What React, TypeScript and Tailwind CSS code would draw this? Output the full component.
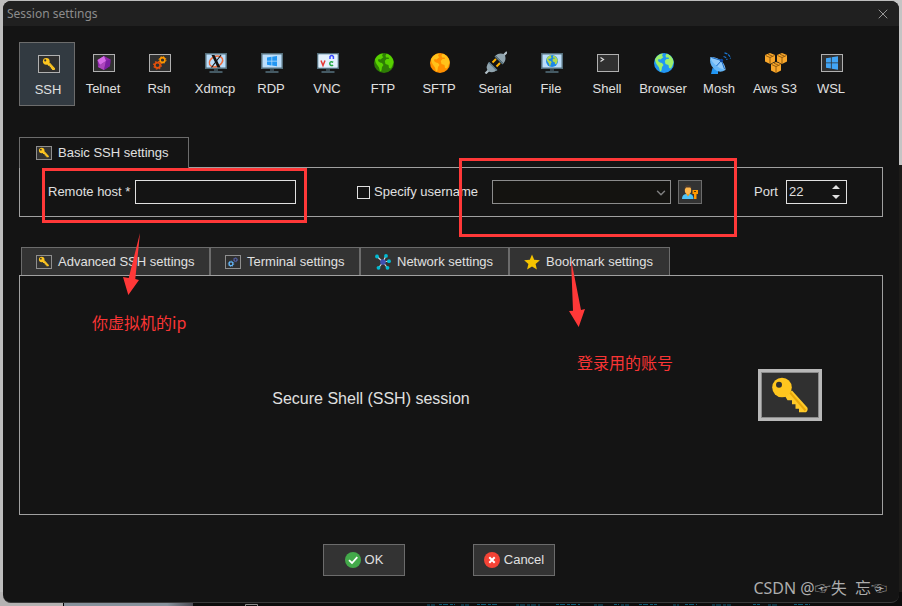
import { useState } from "react";
import type { ReactNode } from "react";
import { ChevronDown, X } from "lucide-react";

const KeyShape = () => (
  <>
    <path
      d="M34 21.5 49.3 38.5Q50.5 41 48 43.3H41V39.7H37.5V35.3H34V31.3H29.5L27 27Z"
      fill="#ffca28"
    />
    <path d="M32 23.5 47.5 41.5" stroke="#e8a80c" strokeWidth="2" />
    <circle cx="24" cy="18.5" r="9.8" fill="#ffc61e" />
    <circle cx="21" cy="15.7" r="3" fill="#303030" />
  </>
);

const KeyFrame = ({ className }: { className: string }) => (
  <svg viewBox="0 0 64 56" className={className} aria-hidden="true">
    <rect x="2" y="2" width="60" height="52" fill="#333" stroke="#8f8f8f" strokeWidth="4" />
    <g transform="translate(-4 -3) scale(1.12)">
      <KeyShape />
    </g>
  </svg>
);

const Frame = ({ children }: { children: ReactNode }) => (
  <>
    <rect x="2.5" y="4.5" width="21" height="17" fill="#303030" stroke="#b0b0b0" />
    {children}
  </>
);

const Monitor = ({ children }: { children: ReactNode }) => (
  <>
    <rect x="2" y="3" width="22" height="16" fill="#546e7a" />
    <rect x="3.5" y="4.5" width="19" height="13" fill="#bbdefb" />
    <rect x="11" y="19" width="4" height="2" fill="#37474f" />
    <rect x="6.5" y="21" width="13" height="2" fill="#455a64" />
    {children}
  </>
);

const Gear = ({
  x,
  y,
  r,
  color,
}: {
  x: number;
  y: number;
  r: number;
  color: string;
}) => (
  <g transform={`translate(${x} ${y})`} fill="none" stroke={color}>
    <circle r={r} strokeWidth={r * 0.65} />
    <circle
      r={r * 1.45}
      strokeWidth={r * 0.4}
      strokeDasharray={`${r * 0.57} ${r * 0.57}`}
    />
  </g>
);

const Globe = ({ sea, land }: { sea: string; land: string }) => (
  <>
    <circle cx="13" cy="13" r="10" fill={sea} />
    <path
      d="M4 9.5Q5.500 5.500 9.500 4L12 3.500 11 6 12.500 7 9.500 9.500 7.500 9 7 11 9 12.500 11 13 12.500 15 11 17 10.500 20.500 9 21.500 8 17.500 5.500 14 4.500 12ZM15.500 3.800Q20 5 22 9.500L22.600 12 21.500 15.500 20 18.500 18 18 17.500 15 14.500 14 13.800 11 15.500 9 18 9 17.500 7.500 15 7.500 14.500 5.500Z"
      fill={land}
    />
  </>
);

const WindowsLogo = () => (
  <path
    d="M7 8.200 11.900 7.400V12.500H7ZM12.700 7.300 19 6.300V12.500H12.700ZM7 13.300H11.900V18.600L7 17.800ZM12.700 13.300H19V19.700L12.700 18.700Z"
    fill="#42a5f5"
  />
);

const Cube = ({ x, y }: { x: number; y: number }) => (
  <g transform={`translate(${x} ${y})`}>
    <path d="M0 2 5 0 10 2V8.500L5 11 0 8.500Z" fill="#f9a72b" />
    <path
      d="M0.500 2.500 5 4.500 9.500 2.500M5 4.500V11M3 1.200 7.500 3.200"
      fill="none"
      stroke="#7a4a08"
      strokeWidth="0.800"
    />
  </g>
);

interface SessionType {
  name: string;
  icon: ReactNode;
}

const sessionTypes: SessionType[] = [
  {
    name: "SSH",
    icon: (
      <Frame>
        <g transform="translate(2 4) scale(0.344)">
          <KeyShape />
        </g>
      </Frame>
    ),
  },
  {
    name: "Telnet",
    icon: (
      <Frame>
        <path d="M13 6 19.500 9.500 19 16 13 20 7 17 6.500 10Z" fill="#8e24aa" />
        <path d="M13 6 15 11 9 15 6.500 10Z" fill="#d56be6" />
        <path d="M9 15 15 11 13 20 7 17Z" fill="#ab47bc" />
        <path d="M15 11 19.500 9.500 19 16 13 20Z" fill="#7b1fa2" />
      </Frame>
    ),
  },
  {
    name: "Rsh",
    icon: (
      <Frame>
        <Gear x={15.5} y={10} r={2.4} color="#ff9800" />
        <Gear x={10.5} y={15.3} r={2.7} color="#e2500c" />
      </Frame>
    ),
  },
  {
    name: "Xdmcp",
    icon: (
      <Monitor>
        <ellipse
          cx="13"
          cy="11.500"
          rx="7"
          ry="5"
          fill="none"
          stroke="#ef6c3a"
          strokeWidth="1.500"
          transform="rotate(-25 13 11.500)"
        />
        <path d="M8.500 5H11.500L17.500 17.500H14.500Z" fill="#111" />
        <path d="M18 5 8.500 17.500" stroke="#111" strokeWidth="1.100" />
      </Monitor>
    ),
  },
  {
    name: "RDP",
    icon: (
      <Monitor>
        <path
          d="M8 7.500 12.500 6.800V10.700H8ZM13.200 6.700 18 6V10.700H13.200ZM8 11.400H12.500V15.500L8 14.800ZM13.200 11.400H18V16.200L13.200 15.600Z"
          fill="#2196f3"
        />
      </Monitor>
    ),
  },
  {
    name: "VNC",
    icon: (
      <Monitor>
        <rect x="3.500" y="4.500" width="19" height="13" fill="#e3f1fd" />
        <path d="M6 10.500 8 15.500 10 10.500" fill="none" stroke="#e53935" strokeWidth="1.500" />
        <path d="M15 9V6.500Q16.700 4.700 18.400 6.500V9" fill="none" stroke="#3949ff" strokeWidth="1.500" />
        <path d="M18.200 12.200Q14.800 10.800 14.800 13.600 14.800 16.200 18.200 15.200" fill="none" stroke="#22a843" strokeWidth="1.500" />
      </Monitor>
    ),
  },
  { name: "FTP", icon: <Globe sea="#2e7d05" land="#58d000" /> },
  { name: "SFTP", icon: <Globe sea="#ff8f00" land="#ffc21a" /> },
  {
    name: "Serial",
    icon: (
      <>
        <path d="M9.500 12.500 13 9M13.500 16.500 17 13" stroke="#ffb300" strokeWidth="2" />
        <path d="M2.500 23.500 6.500 19.500M20 6 24 2" stroke="#b0bec5" strokeWidth="2.200" />
        <path d="M6 12 14 20Q9.500 24 5 21 2 16.500 6 12Z" fill="#90a4ae" />
        <path d="M12.500 5.500 20.500 13.500Q24 9.500 21.500 4.500 16.500 2 12.500 5.500Z" fill="#90a4ae" />
        <path d="M6 12.500 14 20.500M12 6 20 14" stroke="#607d8b" strokeWidth="1.500" />
      </>
    ),
  },
  {
    name: "File",
    icon: (
      <Monitor>
        <g transform="translate(5.200 3.200) scale(0.600)">
          <Globe sea="#1e88e5" land="#b2d94b" />
        </g>
      </Monitor>
    ),
  },
  {
    name: "Shell",
    icon: (
      <Frame>
        <path d="M5.500 7.500 8.500 9.500 5.500 11.500" fill="none" stroke="#ddd" strokeWidth="1.200" />
      </Frame>
    ),
  },
  { name: "Browser", icon: <Globe sea="#2196f3" land="#9cf06a" /> },
  {
    name: "Mosh",
    icon: (
      <>
        <path d="M4 24 5.500 18 11 20V24Z" fill="#2196f3" />
        <path d="M3.500 7 18.500 20Q12.500 24 7 19 1.500 13.500 3.500 7Z" fill="#64b5f6" />
        <path d="M3.500 7Q10 7 14.500 11 18.500 15 18.500 20 12 18.500 8 14.500 4 11 3.500 7Z" fill="#90caf9" />
        <path d="M14.500 10.500 9.500 16M4.500 7.500 14.500 10.500 17.500 19" fill="none" stroke="#1565c0" />
        <circle cx="14.500" cy="10.500" r="1.700" fill="#0d47a1" />
        <path
          d="M16.500 6.500Q19.500 7 20 10M17.500 2.800Q22.500 4 23.500 8.500"
          fill="none"
          stroke="#1976d2"
          strokeWidth="1.200"
          strokeDasharray="3 1"
        />
      </>
    ),
  },
  {
    name: "Aws S3",
    icon: (
      <>
        <Cube x={2} y={3} />
        <Cube x={14} y={3} />
        <Cube x={8} y={12} />
      </>
    ),
  },
  {
    name: "WSL",
    icon: (
      <Frame>
        <WindowsLogo />
      </Frame>
    ),
  },
];

const TerminalIcon = () => (
  <svg viewBox="0 0 16 14" className="h-3.5 w-4 shrink-0" aria-hidden="true">
    <rect x="0.500" y="0.500" width="15" height="13" fill="#303030" stroke="#8f8f8f" />
    <Gear x={10.5} y={4.8} r={1.5} color="#5c6bc0" />
    <Gear x={6} y={8.8} r={1.9} color="#64b5f6" />
  </svg>
);

const NetworkIcon = () => (
  <svg viewBox="0 0 16 16" className="size-4 shrink-0" aria-hidden="true">
    <path
      d="M8 8 2 2.500M8 8 11 1.500M8 8 14.500 7M8 8 12.500 14M8 8 3.500 14"
      stroke="#cfd8dc"
      strokeWidth="1.200"
    />
    <g fill="#00bcd4">
      <circle cx="2" cy="2.500" r="1.900" />
      <circle cx="11" cy="1.900" r="1.900" />
      <circle cx="14" cy="7.200" r="1.900" />
      <circle cx="12.500" cy="13.800" r="1.900" />
      <circle cx="3.500" cy="13.800" r="1.900" />
    </g>
    <circle cx="8" cy="8" r="2.800" fill="#3f51b5" />
  </svg>
);

const StarIcon = () => (
  <svg viewBox="0 0 16 16" className="size-4 shrink-0" aria-hidden="true">
    <path
      d="M8 0.500 10.200 5.700 15.900 6.200 11.600 9.900 12.900 15.400 8 12.500 3.100 15.400 4.400 9.900 0.100 6.200 5.800 5.700Z"
      fill="#f5c400"
    />
  </svg>
);

const UserKeyIcon = () => (
  <svg viewBox="0 0 18 16" className="h-4 w-[18px]" aria-hidden="true">
    <path d="M1 15Q1 10.500 5 10H9Q12.500 10.500 12.500 15Z" fill="#4fc3f7" />
    <path d="M5 9.500H9L7 12.500Z" fill="#ff9800" />
    <ellipse cx="7" cy="6" rx="3.200" ry="4.300" fill="#ffb74d" />
    <path d="M3.500 6Q3 1 7 1 11 1 10.500 6L9.500 3.500H5Z" fill="#4a3b30" />
    <path
      d="M11.500 6H17V10H15.500V15H13V10H11.500Z"
      fill="#ff9800"
    />
    <rect x="13" y="7" width="2" height="1" fill="#5a3a00" />
  </svg>
);

const advancedTabs = [
  {
    label: "Advanced SSH settings",
    icon: <KeyFrame className="h-3.5 w-4 shrink-0" />,
    width: "w-[189px]",
  },
  { label: "Terminal settings", icon: <TerminalIcon />, width: "w-[150px]" },
  { label: "Network settings", icon: <NetworkIcon />, width: "w-[149px]" },
  { label: "Bookmark settings", icon: <StarIcon />, width: "w-[161px]" },
];

// What shows of the desktop around the dialog
const Backdrop = () => (
  <div className="absolute inset-0 flex flex-col" aria-hidden="true">
    <div className="flex flex-1">
      <div className="flex-1 bg-[#bdbdbd]" />
      <div className="flex w-2 flex-col">
        <div className="h-[165px] bg-[#c4c4c4]" />
        <div className="flex-1 bg-[#1c1b19]" />
      </div>
    </div>
    <div className="flex h-[14px] items-stretch">
      <div className="w-[63px] bg-[#b4b2b2]" />
      <div className="w-px bg-black" />
      <div className="w-[129px] bg-linear-to-r from-[#87929c] from-80% to-[#4c4c55]" />
      <div className="flex flex-1 items-end bg-[#0c0c0c]">
        <svg viewBox="0 0 640 3" className="h-[3px] w-[640px]" fill="none">
          <path d="M52.500 3V1.500H64.500V3" stroke="#8c8c8c" />
          <path
            d="M234 2H242M246 1.500H262M268 2H276M284 1.500H306M323 2H347M363 1.500H387M401 2H412M421 1.500H426M428 2H436M446 1.500H464M480 2H486M492 1.500H504M519 2H538M560 1.500H567M575 2H584M601 1.500H617"
            stroke="#0d5c78"
            strokeDasharray="3 1 5 2"
          />
        </svg>
      </div>
    </div>
  </div>
);

const Annotations = () => (
  <div className="pointer-events-none absolute inset-0 font-['Noto_Sans_CJK_SC',sans-serif] text-base leading-6 text-[#f93535]">
    <div className="absolute top-[168px] left-[42px] h-[55px] w-[265px] border-3 border-[#ff3838]" />
    <div className="absolute top-[158px] left-[459px] h-[79px] w-[278px] border-3 border-[#ff3838]" />
    <svg className="absolute top-0 left-0 h-[340px] w-[600px]" viewBox="0 0 600 340" fill="#ff3838" aria-hidden="true">
      <path d="M140 233 135.300 279 139 280 128.300 295 123 277 128.700 278Z" />
      <path d="M571 259 581 310 585 309 578.700 327 569 311 573 310.700Z" />
    </svg>
    <p className="absolute top-[310px] left-[92px]">你虚拟机的ip</p>
    <p className="absolute top-[350px] left-[577px]">登录用的账号</p>
  </div>
);

export default function App() {
  const [session, setSession] = useState("SSH");
  const [port, setPort] = useState(22);
  const [specifyUser, setSpecifyUser] = useState(false);

  return (
    <div className="relative flex min-h-screen flex-col px-[3px] pt-px pb-[3px] font-['Liberation_Sans',Arial,sans-serif] text-[13px] leading-5 text-[#e0e0e0]">
      <Backdrop />
      <div className="relative flex flex-1 flex-col overflow-hidden rounded-lg border-b border-[#3a3a3a] bg-[#141414]">
        <header className="flex h-[25px] items-center justify-between bg-[#202020] pr-2 pl-1">
          <h1 className="font-['Noto_Sans',sans-serif] text-xs text-[#8c8c8c]">
            Session settings
          </h1>
          <button type="button" aria-label="Close" className="text-[#a0a0a0]">
            <X className="size-4" strokeWidth={1.4} />
          </button>
        </header>

        <main className="flex flex-col px-4 pt-4">
          {/* Session types */}
          <nav className="flex">
            {sessionTypes.map((type) => (
              <button
                key={type.name}
                type="button"
                onClick={() => setSession(type.name)}
                className={
                  type.name === session
                    ? "flex h-16 w-14 flex-col items-center gap-[5px] border border-[#6c6c6c] bg-[#323a41] pt-2 pl-0.5 whitespace-nowrap"
                    : "flex h-16 w-14 flex-col items-center gap-[5px] border border-transparent pt-[7px] whitespace-nowrap"
                }
              >
                <svg viewBox="0 0 24 24" className="size-6 shrink-0" aria-hidden="true">
                  {type.icon}
                </svg>
                <span>{type.name}</span>
              </button>
            ))}
          </nav>

          {/* Basic settings */}
          <section className="mt-[31px]">
            <div className="relative -mb-px flex h-[31px] w-[170px] items-center gap-1.5 border border-b-0 border-[#6c6c6c] bg-[#141414] pl-4">
              <KeyFrame className="h-3.5 w-4 shrink-0" />
              <h2>Basic SSH settings</h2>
            </div>
            <div className="flex h-[50px] items-center border border-[#a0a0a0] pr-[35px] pl-7">
              <label htmlFor="host" className="w-[87px]">
                Remote host *
              </label>
              <input
                id="host"
                type="text"
                className="h-6 min-w-0 flex-1 border border-[#e0e0e0] bg-[#141414] px-1"
              />
              <input
                id="specify"
                type="checkbox"
                checked={specifyUser}
                onChange={() => setSpecifyUser(!specifyUser)}
                className="ml-[61px] size-[13px] appearance-none border border-[#e0e0e0] checked:bg-[#e0e0e0]"
              />
              <label htmlFor="specify" className="w-[122px] pl-1">
                Specify username
              </label>
              <div className="relative">
                <select
                  aria-label="Username"
                  disabled={!specifyUser}
                  className="block h-6 w-[179px] appearance-none border border-[#8c8c8c] bg-[#141310] px-1 opacity-100"
                />
                <ChevronDown
                  className="absolute top-1.5 right-[3px] size-3.5 text-[#7c7c7c]"
                  strokeWidth={2.5}
                />
              </div>
              <button
                type="button"
                aria-label="Manage users"
                className="ml-[7px] flex size-6 items-center justify-center border border-[#6c6c6c] bg-[#333]"
              >
                <UserKeyIcon />
              </button>
              <label htmlFor="port" className="ml-[52px] w-8">
                Port
              </label>
              <div className="flex h-6 w-[61px] items-center justify-between border border-[#e0e0e0] pr-1.5 pl-0.5">
                <input
                  id="port"
                  type="number"
                  value={port}
                  onChange={(e) => setPort(Number(e.target.value))}
                  className="w-10 [appearance:textfield] bg-transparent outline-none [&::-webkit-inner-spin-button]:appearance-none"
                />
                <div className="flex flex-col gap-1.5">
                  <button type="button" aria-label="Increase port" onClick={() => setPort(port + 1)}>
                    <svg viewBox="0 0 8 4" className="block h-1 w-2" fill="#e0e0e0">
                      <path d="M4 0 8 4H0Z" />
                    </svg>
                  </button>
                  <button type="button" aria-label="Decrease port" onClick={() => setPort(port - 1)}>
                    <svg viewBox="0 0 8 4" className="block h-1 w-2" fill="#e0e0e0">
                      <path d="M0 0H8L4 4Z" />
                    </svg>
                  </button>
                </div>
              </div>
            </div>
          </section>

          {/* Advanced settings */}
          <section className="mt-[30px]">
            <div className="flex pl-0.5">
              {advancedTabs.map((tab) => (
                <button
                  key={tab.label}
                  type="button"
                  className={`flex h-7 items-center gap-1.5 border border-b-0 border-[#6c6c6c] bg-[#333] pt-px pl-3.5 whitespace-nowrap ${tab.width}`}
                >
                  {tab.icon}
                  {tab.label}
                </button>
              ))}
            </div>
            <div className="flex h-60 items-center gap-9 border border-[#a0a0a0] pr-[60px]">
              <p className="flex-1 pt-2 text-center text-base">
                Secure Shell (SSH) session
              </p>
              <svg viewBox="0 0 64 52" className="h-[52px] w-16" aria-hidden="true">
                <rect width="64" height="52" fill="#b8b8b8" />
                <rect x="3" y="3" width="58" height="46" fill="#8a8a8a" />
                <rect x="4" y="4" width="56" height="44" fill="#303030" />
                <KeyShape />
              </svg>
            </div>
          </section>

          <footer className="mt-[29px] flex justify-center gap-[68px] pr-6">
            <button
              type="button"
              className="flex h-8 w-[82px] items-center justify-center gap-1 border border-[#6c6c6c] bg-[#333]"
            >
              <svg viewBox="0 0 16 16" className="size-4" aria-hidden="true">
                <circle cx="8" cy="8" r="8" fill="#43a94a" />
                <path d="M4 8.200 7 11 12.300 5.200" fill="none" stroke="#fff" strokeWidth="1.800" />
              </svg>
              OK
            </button>
            <button
              type="button"
              className="flex h-8 w-[82px] items-center justify-center gap-1 border border-[#6c6c6c] bg-[#333]"
            >
              <svg viewBox="0 0 16 16" className="size-4" aria-hidden="true">
                <circle cx="8" cy="8" r="8" fill="#f44336" />
                <path d="M5.300 5.300 10.700 10.700M10.700 5.300 5.300 10.700" stroke="#fff" strokeWidth="2" />
              </svg>
              Cancel
            </button>
          </footer>
        </main>
      </div>

      <Annotations />
      <p className="absolute right-[15px] bottom-1.5 font-['Noto_Sans','Noto_Sans_CJK_SC','DejaVu_Sans',sans-serif] text-base leading-6 whitespace-pre text-[#adadad]">
        CSDN @☞失{"  "}忘☜
      </p>
    </div>
  );
}
